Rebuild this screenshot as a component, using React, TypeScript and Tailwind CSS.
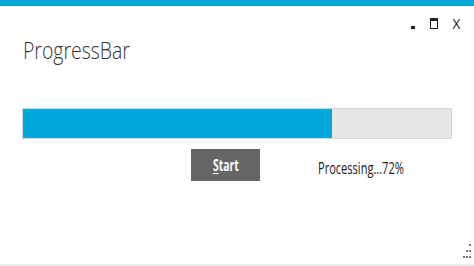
import React from "react";

export default function App() {
  const pct = 72;
  return (
    <div className="w-[474px] h-[266px] bg-white flex flex-col overflow-hidden" style={{ fontFamily: '"Open Sans", "Noto Sans", sans-serif' }}>
      <div className="h-[6px] bg-[#06a7db] shrink-0" />
      <div className="flex justify-end items-center h-[12px] mt-[11px] pr-[13px] text-[#111]">
        <div className="w-[4px] h-[3px] bg-[#222] mt-[8px]" />
        <div className="w-[8px] h-[11px] border-[1.5px] border-[#222] border-t-[3px] ml-[15px]" />
        <div className="ml-[14px] text-[15px] leading-none font-medium origin-center scale-x-[0.9]">X</div>
      </div>
      <div className="pl-[23px] mt-[6px] h-[30px] text-[24px] leading-[30px] text-[#333] font-light">
        <div className="origin-left scale-x-[0.81] whitespace-nowrap">ProgressBar</div>
      </div>
      <div className="pl-[22px] mt-[43px]">
        <div className="h-[31px] w-[430px] bg-[#e6e6e6] border border-[#d6d6d6] flex">
          <div className="h-full bg-[#00a8dc]" style={{ width: `${Math.round((pct / 100) * 429)}px` }} />
        </div>
      </div>
      <div className="flex items-start mt-[10px] pl-[191px]">
        <button className="w-[69px] h-[32px] bg-[#666666] text-white text-[16px] leading-[32px] font-bold flex justify-center">
          <span className="scale-x-[0.65] inline-block whitespace-nowrap">
            <span className="underline underline-offset-2">S</span>tart
          </span>
        </button>
        <div className="ml-[58px] mt-[9px] h-[20px] text-[17px] leading-[20px] text-[#222]">
          <div className="origin-left scale-x-[0.65] whitespace-nowrap">Processing...{pct}%</div>
        </div>
      </div>
      <div className="flex-1" />
      <div className="flex justify-end pr-[3px] pb-[6px]">
        <div className="grid grid-cols-[2px_2px_2px] gap-x-[1px] gap-y-[4px]">
          <span />
          <span />
          <span className="w-[2px] h-[2px] bg-[#777]" />
          <span />
          <span className="w-[2px] h-[2px] bg-[#777]" />
          <span className="w-[2px] h-[2px] bg-[#777]" />
          <span className="w-[2px] h-[2px] bg-[#777]" />
          <span className="w-[2px] h-[2px] bg-[#777]" />
          <span className="w-[2px] h-[2px] bg-[#777]" />
        </div>
      </div>
      <div className="h-[2px] bg-[#ececec]" />
    </div>
  );
}
